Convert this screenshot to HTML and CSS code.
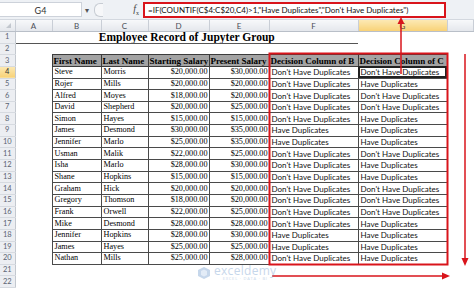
FILE: index.html
```html
<!DOCTYPE html>
<html lang="en">
<head>
  <meta charset="UTF-8" />
  <title>Employee Record of Jupyter Group</title>
  <link rel="stylesheet" href="styles.css">
</head>
<body>
  <div class="app">
    <!-- formula bar -->
    <div class="fbar">
      <div class="namebox">G4</div>
      <div class="nb-arrow">&#9662;</div>
      <div class="grip"></div>
      <div class="fx"><i>f</i><sub>x</sub></div>
      <div class="formula">=IF(COUNTIF(C$4:C$20,C4)&gt;1,"Have Duplicates","Don't Have Duplicates")</div>
    </div>

    <table class="sheet">
      <colgroup>
        <col class="w-rh"><col class="w-a"><col class="w-b"><col class="w-c">
        <col class="w-d"><col class="w-e"><col class="w-f"><col class="w-g"><col>
      </colgroup>
      <thead>
        <tr class="colhead">
          <th class="corner"><span></span></th>
          <th>A</th><th>B</th><th>C</th><th>D</th><th>E</th><th>F</th><th class="sel">G</th><th></th>
        </tr>
      </thead>
      <tbody id="rows">
        <tr>
          <th class="rh">1</th>
          <td colspan="6" class="title">Employee Record of Jupyter Group</td>
          <td></td><td></td>
        </tr>
        <tr><th class="rh">2</th><td></td><td></td><td></td><td></td><td></td><td></td><td></td><td></td></tr>
        <tr>
          <th class="rh">3</th><td></td>
          <td class="hd">First Name</td>
          <td class="hd">Last Name</td>
          <td class="hd">Starting Salary</td>
          <td class="hd">Present Salary</td>
          <td class="hd">Decision Column of B</td>
          <td class="hd">Decision Column of C</td>
          <td></td>
        </tr>
      </tbody>
    </table>

    <!-- annotations -->
    <svg class="marks" width="474" height="289" viewBox="0 0 474 289">
      <rect x="269.5" y="53.5" width="178" height="211" fill="none" stroke="#d9141b" stroke-width="2"/>
      <line x1="401" y1="74" x2="401" y2="22" stroke="#d9141b" stroke-width="1.5"/>
      <polygon points="401,17 397.5,24 404.5,24" fill="#d9141b"/>
      <line x1="465" y1="54" x2="465" y2="259" stroke="#d9141b" stroke-width="1.5"/>
      <polygon points="465,266 461.5,258 468.5,258" fill="#d9141b"/>
      <line x1="272" y1="276" x2="442" y2="276" stroke="#d9141b" stroke-width="1.5"/>
      <polygon points="450,276 442,272.5 442,279.5" fill="#d9141b"/>
    </svg>

    <div class="wmark">
      <svg width="14" height="12" viewBox="0 0 14 12">
        <path d="M1 3 L7 0 L13 3 L13 9 L7 12 L1 9 Z" fill="#8fb0d8"/>
        <path d="M4 4 L7 2.5 L10 4 L10 8 L7 9.5 L4 8 Z" fill="#c9daf0"/>
      </svg>
      <div>
        <div class="wm-name">exceldemy</div>
        <div class="wm-sub">EXCEL · DATA · BI</div>
      </div>
    </div>
  </div>

  <script>
    const people = [
      ["Steve", "Morris", 20, 30, 0, 0],
      ["Rojer", "Mills", 20, 20, 0, 1],
      ["Alfred", "Moyes", 18, 20, 0, 0],
      ["David", "Shepherd", 20, 25, 0, 0],
      ["Simon", "Hayes", 15, 15, 0, 1],
      ["James", "Desmond", 30, 35, 1, 1],
      ["Jennifer", "Marlo", 25, 35, 1, 1],
      ["Usman", "Malik", 22, 25, 0, 0],
      ["Isha", "Marlo", 28, 30, 0, 1],
      ["Shane", "Hopkins", 15, 15, 0, 1],
      ["Graham", "Hick", 20, 20, 0, 0],
      ["Gregory", "Thomson", 18, 20, 0, 0],
      ["Frank", "Orwell", 22, 25, 0, 0],
      ["Mike", "Desmond", 28, 28, 0, 1],
      ["Jennifer", "Hopkins", 28, 30, 1, 1],
      ["James", "Hayes", 25, 25, 1, 1],
      ["Nathan", "Mills", 25, 28, 0, 1]
    ];

    const money = k => "$" + k + ",000.00";
    const dup = v => v ? "Have Duplicates" : "Don't Have Duplicates";

    const body = document.getElementById("rows");
    people.forEach((p, i) => {
      const n = i + 4;
      body.innerHTML += `
        <tr>
          <th class="rh${n === 4 ? " sel" : ""}">${n}</th><td></td>
          <td class="c">${p[0]}</td>
          <td class="c">${p[1]}</td>
          <td class="c num">${money(p[2])}</td>
          <td class="c num">${money(p[3])}</td>
          <td class="c txt">${dup(p[4])}</td>
          <td class="c txt${n === 4 ? " active" : ""}">${dup(p[5])}</td>
          <td></td>
        </tr>`;
    });
    for (let n = 21; n <= 22; n++) {
      body.innerHTML += `<tr><th class="rh">${n}</th><td></td><td></td><td></td><td></td><td></td><td></td><td></td><td></td></tr>`;
    }
  </script>
</body>
</html>
```

FILE: styles.css
```css
body {
  margin: 0;
  background: #fff;
  font-family: "Liberation Serif", serif;
}
.app {
  position: relative;
  width: 474px;
  height: 289px;
  overflow: hidden;
}
.fbar {
  display: flex;
  align-items: center;
  height: 20px;
  background: #eef1f5;
  box-sizing: border-box;
  border-bottom: 1px solid #d3d8df;
  font-family: Lato, sans-serif;
}
.namebox {
  width: 82px;
  height: 15px;
  line-height: 15px;
  box-sizing: border-box;
  background: #fff;
  border: 1px solid #cdd2da;
  border-left: none;
  text-align: center;
  font-size: 9px;
  color: #333;
}
.nb-arrow {
  width: 10px;
  font-size: 8px;
  color: #555;
  text-align: center;
}
.grip {
  width: 8px;
  height: 12px;
  margin-left: 2px;
  border: 1px solid #c7ccd3;
  border-radius: 6px 0 0 6px;
  border-right: none;
  background: #f6f7f9;
}
.fx {
  width: 40px;
  text-align: right;
  padding-right: 4px;
  box-sizing: border-box;
  font-family: "Liberation Serif", serif;
  font-size: 10px;
  line-height: 10px;
  color: #444;
}
.fx sub {
  font-size: 6px;
  line-height: 6px;
}
.formula {
  width: 303px;
  height: 16px;
  line-height: 12px;
  box-sizing: border-box;
  border: 2px solid #d9141b;
  background: #fff;
  padding-left: 3px;
  font-size: 8px;
  color: #111;
  white-space: nowrap;
  overflow: hidden;
}

.sheet {
  width: 474px;
  table-layout: fixed;
  border-collapse: collapse;
}
.sheet tr {
  height: 11.65px;
}
.sheet .colhead {
  height: 11.5px;
}
.w-rh { width: 15px; }
.w-a { width: 37px; }
.w-b { width: 49px; }
.w-c { width: 47px; }
.w-d { width: 61px; }
.w-e { width: 60px; }
.w-f { width: 89px; }
.w-g { width: 89px; }
.sheet th,
.sheet td {
  padding: 0;
  font-size: 8px;
  line-height: 8px;
  white-space: nowrap;
  overflow: hidden;
}
.colhead th {
  font-family: Lato, sans-serif;
  font-weight: normal;
  color: #4a4f57;
  background: linear-gradient(#f7f8fa, #e4e7ec);
  border-right: 1px solid #c9ced6;
  border-bottom: 1px solid #b9bfc8;
}
.colhead th.sel {
  background: linear-gradient(#fce9b4, #f8d277);
  color: #3d3d3d;
}
.corner span {
  display: block;
  width: 0;
  height: 0;
  margin: 0 0 0 6px;
  border-left: 5px solid transparent;
  border-bottom: 5px solid #c2c7ce;
}
.rh {
  font-family: Lato, sans-serif;
  font-weight: normal;
  font-size: 7.5px !important;
  color: #5b6472;
  background: #eceef2;
  border-right: 1px solid #c3c8cf;
  border-bottom: 1px solid #d6dae0;
  text-align: center;
}
.rh.sel {
  background: linear-gradient(#fce9b4, #f8d277);
  color: #333;
}
.title {
  text-align: center;
  font-weight: bold;
  font-size: 11.5px !important;
  line-height: 10px !important;
  border-bottom: 1px solid #555;
}
.hd {
  background: #a3a3a3;
  border: 1px solid #3c3c3c;
  font-weight: bold;
  font-size: 9px !important;
  padding-left: 1px !important;
}
.c {
  border: 1px solid #4a4a4a;
  font-size: 8.2px !important;
  padding-left: 2px !important;
}
.c.num {
  text-align: right;
  padding: 0 1px 0 0 !important;
}
.c.txt {
  font-family: Lato, sans-serif;
  font-size: 8px !important;
  color: #111;
}
.c.active {
  outline: 2px solid #222;
  outline-offset: -2px;
}

.marks {
  position: absolute;
  left: 0;
  top: 0;
  pointer-events: none;
}
.wmark {
  position: absolute;
  left: 197px;
  top: 265px;
  display: flex;
  align-items: center;
  gap: 3px;
  opacity: 0.5;
  font-family: "Open Sans", sans-serif;
  color: #8fb0d8;
}
.wm-name {
  font-size: 12px;
  line-height: 11px;
  letter-spacing: 0.3px;
}
.wm-sub {
  font-size: 4px;
  line-height: 5px;
  letter-spacing: 0.8px;
  text-align: center;
}
```
